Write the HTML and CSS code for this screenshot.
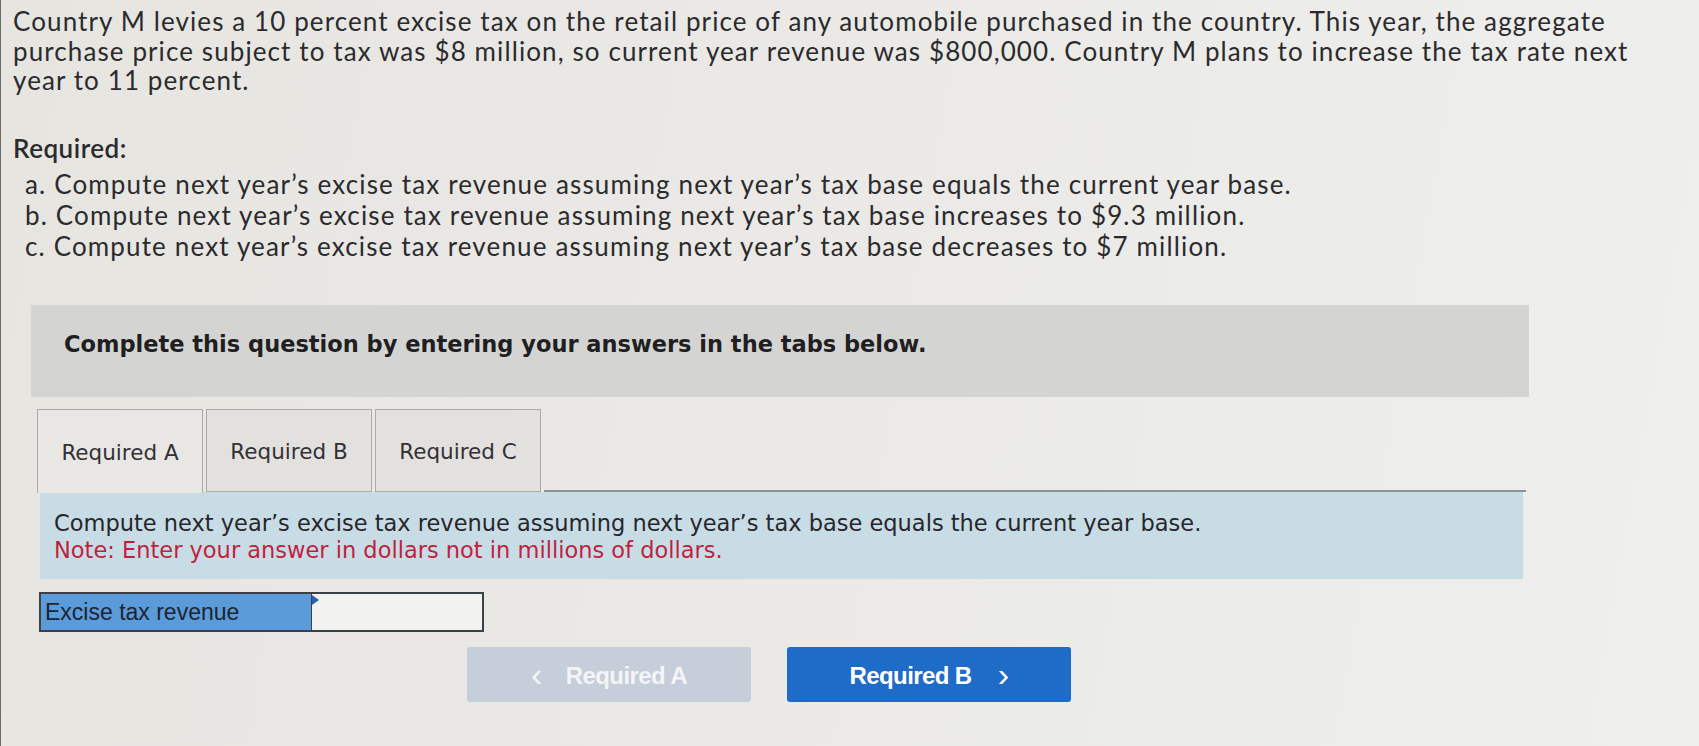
FILE: index.html
```html
<!DOCTYPE html>
<html lang="en">
<head>
  <meta charset="UTF-8" />
  <meta name="viewport" content="width=device-width, initial-scale=1.0"/>
  <title>Excise Tax Question</title>
  <link rel="stylesheet" href="styles.css">
</head>
<body>

<div class="page">
  <p class="intro">Country M levies a 10 percent excise tax on the retail price of any automobile purchased in the country. This year, the aggregate purchase price subject to tax was $8 million, so current year revenue was $800,000. Country M plans to increase the tax rate next year to 11 percent.</p>

  <h3 class="required-title">Required:</h3>
  <div class="req-list">
    <div class="req-item">a. Compute next year’s excise tax revenue assuming next year’s tax base equals the current year base.</div>
    <div class="req-item">b. Compute next year’s excise tax revenue assuming next year’s tax base increases to $9.3 million.</div>
    <div class="req-item">c. Compute next year’s excise tax revenue assuming next year’s tax base decreases to $7 million.</div>
  </div>

  <div class="question">
    <div class="instructions">Complete this question by entering your answers in the tabs below.</div>

    <!-- Tabs -->
    <div class="tabs">
      <button class="tab active">Required A</button>
      <button class="tab">Required B</button>
      <button class="tab">Required C</button>
      <div class="tab-rest"></div>
    </div>

    <div class="tab-panel">
      <div class="panel-text">Compute next year’s excise tax revenue assuming next year’s tax base equals the current year base.</div>
      <div class="note">Note: Enter your answer in dollars not in millions of dollars.</div>
    </div>

    <div class="answer-row">
      <label for="revenue" class="answer-label">Excise tax revenue</label>
      <div class="answer-cell">
        <span class="cell-marker"></span>
        <input type="text" id="revenue" />
      </div>
    </div>

    <div class="nav">
      <button class="nav-btn prev" disabled><span class="chev">&lsaquo;</span> Required A</button>
      <button class="nav-btn next">Required B <span class="chev">&rsaquo;</span></button>
    </div>
  </div>
</div>

</body>
</html>
```

FILE: styles.css
```css
:root {
  --text-color: #2b2b2e;
  --panel-gray: #d4d4d2;
  --panel-blue: #c8dce6;
  --note-red: #c21f3e;
  --cell-blue: #5c9bd9;
  --btn-blue: #1f6bc8;
  --btn-muted: #c5ced9;
}

* {
  box-sizing: border-box;
}

body {
  margin: 0;
  min-height: 100vh;
  background: linear-gradient(100deg, #e6e5e0 0%, #eae9e6 45%, #efefed 100%);
  border-left: 1px solid #6b6b6b;
  color: var(--text-color);
}

.page {
  padding: 7px 13px 0 12px;
}

.intro {
  margin: 0;
  font-family: Lato, sans-serif;
  font-size: 26px;
  letter-spacing: 1.1px;
  line-height: 29.5px;
  max-width: 1660px;
}

.required-title {
  margin: 37px 0 6px;
  font-family: Lato, sans-serif;
  font-size: 26px;
  font-weight: 600;
  letter-spacing: 0.5px;
  line-height: 30px;
}

.req-list {
  padding-left: 12px;
  font-family: Lato, sans-serif;
  font-size: 26px;
  letter-spacing: 1.15px;
  line-height: 31px;
}

.question {
  margin: 43px 0 0 18px;
  width: 1498px;
}

.instructions {
  background: var(--panel-gray);
  height: 92px;
  padding: 26px 0 0 33px;
  font-family: "DejaVu Sans", Verdana, sans-serif;
  font-size: 22.5px;
  font-weight: bold;
  line-height: 26px;
  color: #1f1f22;
}

.tabs {
  display: flex;
  align-items: flex-end;
  margin-top: 12px;
  padding-left: 6px;
  height: 83px;
}

.tab {
  width: 166px;
  height: 83px;
  margin-right: 3px;
  border: 1px solid #a9a9a7;
  background: #e2e1dd;
  font-family: "DejaVu Sans", Verdana, sans-serif;
  font-size: 21.5px;
  color: #343036;
  cursor: pointer;
  padding: 2px 0 0;
}

.tab.active {
  background: #e8e7e3;
  border-bottom: none;
  height: 84px;
  margin-bottom: -1px;
  position: relative;
}

.tab-rest {
  flex: 1;
  border-bottom: 2px solid #8e9094;
  margin-right: 3px;
}

.tab-panel {
  background: var(--panel-blue);
  margin: 0 6px 0 9px;
  height: 87px;
  padding: 18px 0 0 14px;
  font-family: "DejaVu Sans", Verdana, sans-serif;
  font-size: 22.5px;
  line-height: 27px;
  color: #27272b;
}

.note {
  color: var(--note-red);
}

.answer-row {
  display: flex;
  margin: 13px 0 0 8px;
  width: 445px;
  height: 40px;
  border: 2px solid #3b4049;
}

.answer-label {
  width: 271px;
  background: var(--cell-blue);
  padding-left: 4px;
  font-family: "Liberation Sans", Arial, sans-serif;
  font-size: 23px;
  line-height: 36px;
  color: #1b2433;
  border-right: 1px solid #3b4049;
}

.answer-cell {
  flex: 1;
  position: relative;
  background: #f2f2f0;
}

.answer-cell input {
  width: 100%;
  height: 100%;
  border: none;
  background: transparent;
  outline: none;
  font-size: 20px;
}

.cell-marker {
  position: absolute;
  top: 1px;
  left: 0;
  width: 0;
  height: 0;
  border-top: 5px solid transparent;
  border-bottom: 5px solid transparent;
  border-left: 7px solid #2f5fa8;
}

.nav {
  display: flex;
  gap: 36px;
  margin: 15px 0 0 436px;
}

.nav-btn {
  width: 284px;
  height: 55px;
  border: none;
  border-radius: 3px;
  font-family: "Liberation Sans", Arial, sans-serif;
  font-size: 24px;
  font-weight: bold;
  letter-spacing: -0.6px;
  color: #fff;
  cursor: pointer;
}

.nav-btn .chev {
  font-size: 34px;
  font-weight: normal;
  vertical-align: -2px;
}

.prev {
  background: var(--btn-muted);
  color: #f3f5f8;
  cursor: default;
}

.prev .chev {
  margin-right: 18px;
}

.next {
  background: var(--btn-blue);
}

.next .chev {
  margin-left: 20px;
}
```
